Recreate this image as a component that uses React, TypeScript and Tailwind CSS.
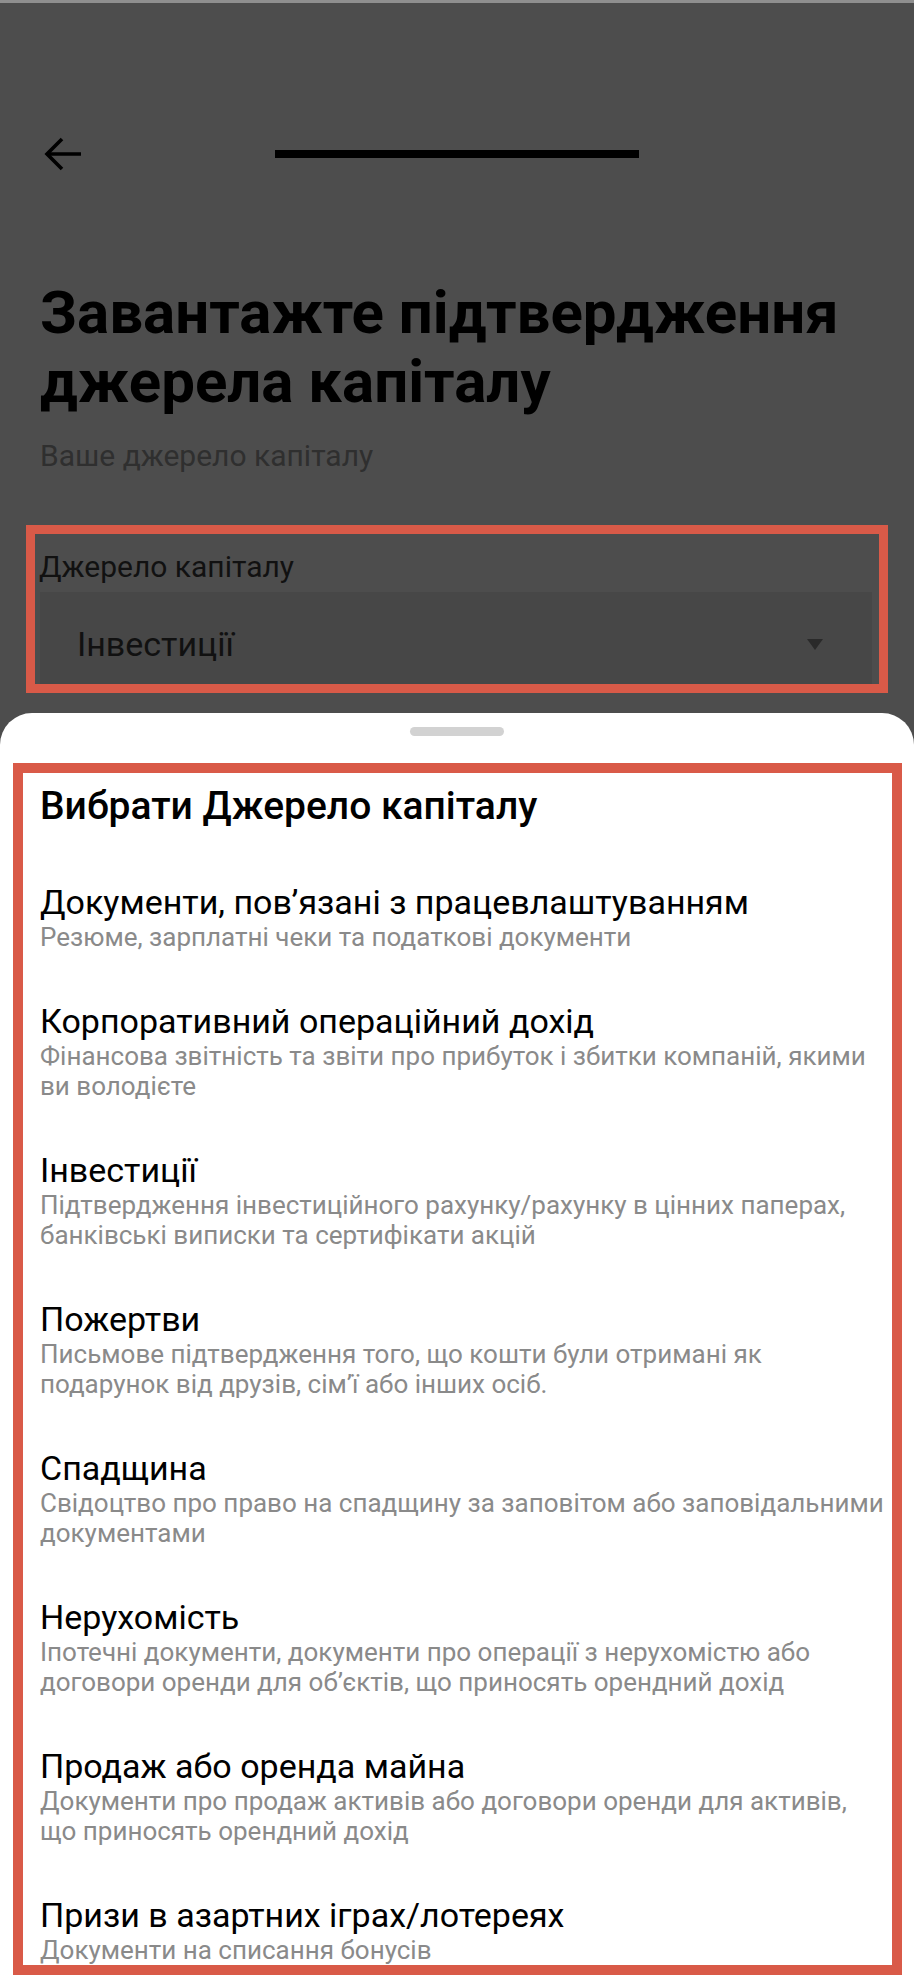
// ─── Data ────────────────────────────────────────────────
interface Source {
  title: string;
  lines: string[];
}

const SOURCES: Source[] = [
  {
    title: "Документи, пов’язані з працевлаштуванням",
    lines: ["Резюме, зарплатні чеки та податкові документи"],
  },
  {
    title: "Корпоративний операційний дохід",
    lines: ["Фінансова звітність та звіти про прибуток і збитки компаній, якими", "ви володієте"],
  },
  {
    title: "Інвестиції",
    lines: [
      "Підтвердження інвестиційного рахунку/рахунку в цінних паперах,",
      "банківські виписки та сертифікати акцій",
    ],
  },
  {
    title: "Пожертви",
    lines: ["Письмове підтвердження того, що кошти були отримані як", "подарунок від друзів, сім’ї або інших осіб."],
  },
  {
    title: "Спадщина",
    lines: ["Свідоцтво про право на спадщину за заповітом або заповідальними", "документами"],
  },
  {
    title: "Нерухомість",
    lines: [
      "Іпотечні документи, документи про операції з нерухомістю або",
      "договори оренди для об’єктів, що приносять орендний дохід",
    ],
  },
  {
    title: "Продаж або оренда майна",
    lines: ["Документи про продаж активів або договори оренди для активів,", "що приносять орендний дохід"],
  },
  {
    title: "Призи в азартних іграх/лотереях",
    lines: ["Документи на списання бонусів"],
  },
];

function BackArrow() {
  return (
    <svg width="38" height="34" viewBox="0 0 38 34" fill="none" stroke="black" strokeWidth="3.6">
      <path d="M19 2 L4 17 L19 32" strokeLinejoin="miter" />
      <path d="M4 17 H38" />
    </svg>
  );
}

// ─── Page ────────────────────────────────────────────────
export default function App() {
  return (
    <div className="w-[914px] h-[1978px] overflow-hidden flex flex-col bg-[#4d4d4d] font-['Roboto','Noto_Sans',sans-serif]">
      {/* status strip */}
      <div className="h-[3px] bg-[#8f8f8f]" />

      {/* header */}
      <div className="flex items-center h-[38px] mt-[132px] pl-[43px]">
        <BackArrow />
        <div className="ml-[194px] w-[364px] h-[8px] bg-black" />
      </div>

      {/* title */}
      <div className="px-[40px] mt-[105px]">
        <h1 className="text-[60px] leading-[69px] font-bold text-black">
          Завантажте підтвердження
          <br />
          джерела капіталу
        </h1>
        <p className="mt-[24px] text-[30px] leading-[32px] text-[#2f2f2f]">Ваше джерело капіталу</p>
      </div>

      {/* selected value */}
      <div className="mx-[26px] mt-[53px] h-[168px] border-[9px] border-[#d95a48] flex flex-col">
        <div className="pl-[4px] pt-[15px] text-[30px] leading-[36px] text-[#111]">Джерело капіталу</div>
        <div className="mt-[7px] ml-[5px] mr-[7px] flex-1 bg-[#474747] flex items-center pt-[12px] pl-[37px] pr-[49px]">
          <span className="flex-1 text-[34px] leading-[40px] text-[#111]">Інвестиції</span>
          <span className="w-0 h-0 border-l-[8px] border-r-[8px] border-t-[11px] border-l-transparent border-r-transparent border-t-[#2a2a2a]" />
        </div>
      </div>

      {/* bottom sheet */}
      <div className="mt-[20px] flex-1 bg-white rounded-t-[32px] flex flex-col">
        <div className="mx-auto mt-[14px] w-[94px] h-[9px] rounded-full bg-[#d2d2d2]" />
        <div className="mt-[27px] mb-[3px] ml-[13px] mr-[12px] flex-1 overflow-hidden border-[10px] border-[#d95a48] pl-[17px] pt-[11px]">
          <h2 className="text-[39px] leading-[44px] font-medium text-black">Вибрати Джерело капіталу</h2>
          <ul className="mt-[54px] flex flex-col gap-[49px]">
            {SOURCES.map((s) => (
              <li key={s.title}>
                <div className="text-[34px] leading-[40px] text-black">{s.title}</div>
                <div className="text-[26px] leading-[30px] text-[#8a8a8a]">
                  {s.lines.map((l) => (
                    <div key={l} className="whitespace-nowrap">
                      {l}
                    </div>
                  ))}
                </div>
              </li>
            ))}
          </ul>
        </div>
      </div>
    </div>
  );
}
